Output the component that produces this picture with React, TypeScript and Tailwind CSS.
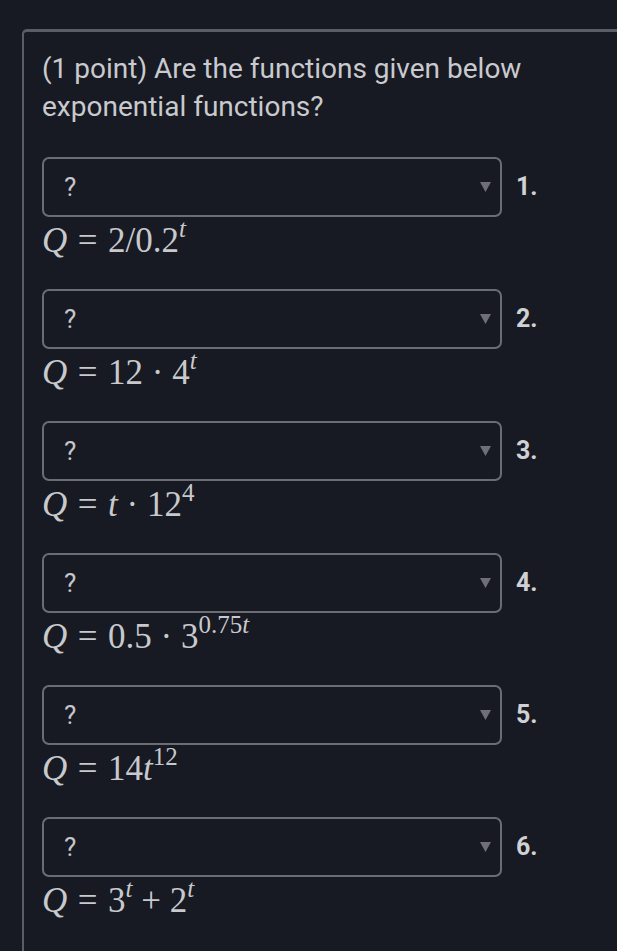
const Eq = () => <span className="mx-[0.3em]">=</span>;
const Dot = () => <span className="mx-[0.25em]">·</span>;
const Plus = () => <span className="mx-[0.25em]">+</span>;

const items = [
  { n: 1, math: <><i>Q</i><Eq />2/0.2<sup><i>t</i></sup></> },
  { n: 2, math: <><i>Q</i><Eq />12<Dot />4<sup><i>t</i></sup></> },
  { n: 3, math: <><i>Q</i><Eq /><i>t</i><Dot />12<sup>4</sup></> },
  { n: 4, math: <><i>Q</i><Eq />0.5<Dot />3<sup>0.75<i>t</i></sup></> },
  { n: 5, math: <><i>Q</i><Eq />14<i>t</i><sup>12</sup></> },
  { n: 6, math: <><i>Q</i><Eq />3<sup><i>t</i></sup><Plus />2<sup><i>t</i></sup></> },
];

export default function App() {
  return (
    <div className="min-h-[951px] bg-[#171923] pt-[29px] pl-[22px] overflow-hidden font-['Roboto',sans-serif]">
      <div className="min-h-[940px] border-t-[3px] border-l-2 border-[#5a5d66] rounded-tl-[5px] pl-[18px] pt-[18px]">
        <p className="text-[28px] leading-[38px] text-[#c9cacd] w-[540px]">
          (1 point) Are the functions given below exponential functions?
        </p>
        <div className="mt-[31px] flex flex-col gap-[24px]">
          {items.map((it) => (
            <div key={it.n}>
              <div className="flex items-center">
                <div className="w-[460px] h-[60px] border-2 border-[#6b6d74] rounded-[7px] flex items-center justify-between pl-[20px] pr-[9px]">
                  <span className="text-[26px] text-[#c5c6ca]">?</span>
                  <svg width="11" height="10" viewBox="0 0 11 10">
                    <path d="M0 0H11L5.5 10Z" fill="#6e7076" />
                  </svg>
                </div>
                <span className="ml-[14px] text-[25px] font-bold text-[#d0d1d4]">{it.n}.</span>
              </div>
              <div className="h-[48px] text-[35px] leading-[48px] text-[#c8c9cc] font-['Liberation_Serif',serif] whitespace-pre [&_sup]:text-[25px] [&_sup]:top-[-0.6em]">
                {it.math}
              </div>
            </div>
          ))}
        </div>
      </div>
    </div>
  );
}
